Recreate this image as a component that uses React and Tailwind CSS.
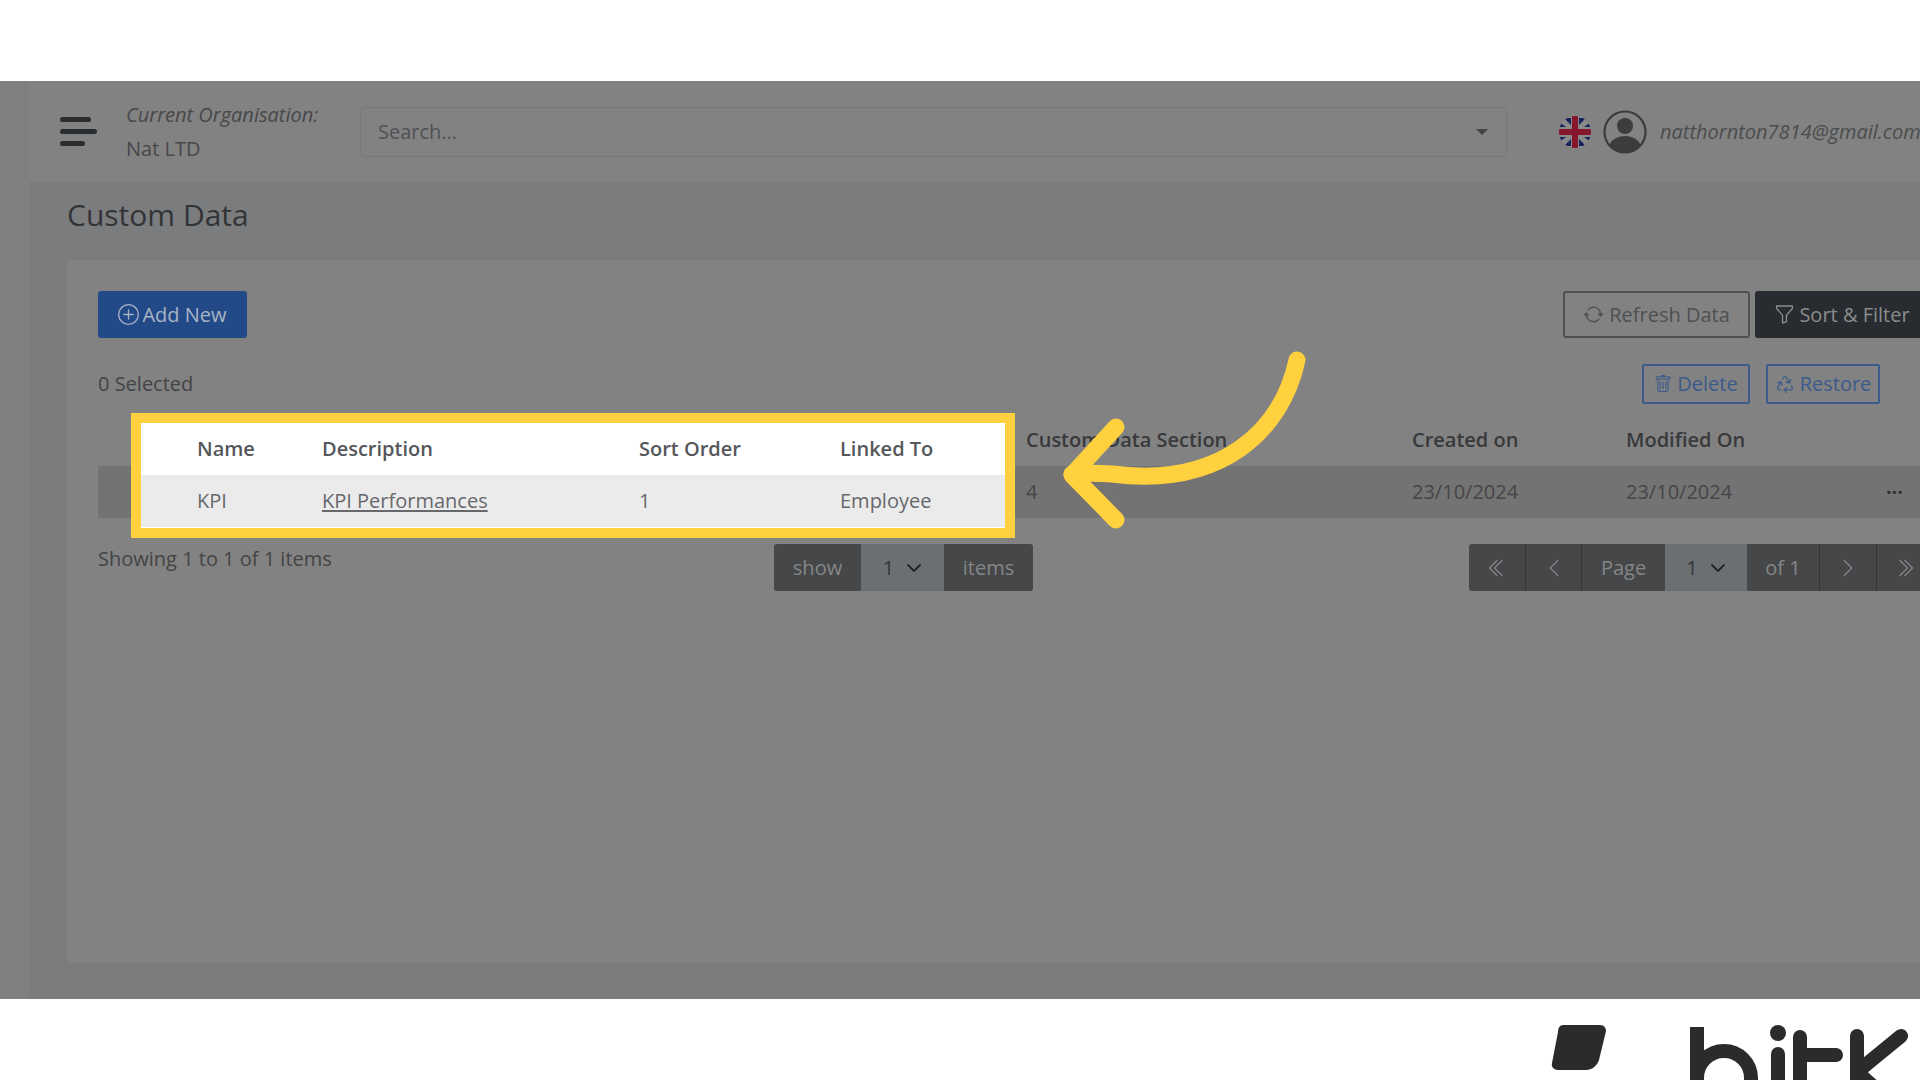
import { BsArrowRepeat, BsChevronDoubleLeft, BsChevronDoubleRight, BsChevronDown, BsChevronLeft, BsChevronRight, BsFunnel, BsPlusCircle, BsTrash } from "react-icons/bs";
import { Recycle } from "lucide-react";

const gridCols = "grid grid-cols-[98px_125px_317px_201px_187px_386px_214px_279px] items-center";

function Flag() {
    return (
        <svg width="32" height="32" viewBox="0 0 32 32">
            <defs>
                <clipPath id="flagClip">
                    <circle cx="16" cy="16" r="16" />
                </clipPath>
            </defs>
            <g clipPath="url(#flagClip)">
                <rect width="32" height="32" fill="#8a8a8a" />
                <path d="M0 0L32 32M32 0L0 32" stroke="#8a8a8a" strokeWidth="7" />
                <path d="M5 2L12 9V2ZM27 2L20 9V2ZM5 30L12 23V30ZM27 30L20 23V30ZM0 6L7 11H0ZM32 6L25 11H32ZM0 26L7 21H0ZM32 26L25 21H32Z" fill="#14235a" />
                <path d="M13 0H19V13H32V19H19V32H13V19H0V13H13Z" fill="#86162c" />
            </g>
        </svg>
    );
}

function UserIcon() {
    return (
        <svg width="44" height="44" viewBox="0 0 44 44">
            <defs>
                <clipPath id="userClip">
                    <circle cx="22" cy="22" r="20" />
                </clipPath>
            </defs>
            <circle cx="22" cy="16" r="8" fill="#3b3c3d" />
            <ellipse cx="22" cy="38" rx="16" ry="12" fill="#3b3c3d" clipPath="url(#userClip)" />
            <circle cx="22" cy="22" r="20.5" fill="none" stroke="#3b3c3d" strokeWidth="2.2" />
        </svg>
    );
}

function Arrow() {
    return (
        <svg className="absolute left-[1050px] top-[265px]" width="270" height="200" viewBox="1050 346 270 200">
            <path d="M1297 360C1282 430 1222 488 1112 474C1098 473 1084 473 1072 474" fill="none" stroke="#ffd13f" strokeWidth="17" strokeLinecap="round" />
            <path d="M1116 427L1072 475L1116 520" fill="none" stroke="#ffd13f" strokeWidth="17" strokeLinecap="round" strokeLinejoin="round" />
        </svg>
    );
}

function Logo() {
    return (
        <svg width="420" height="81" viewBox="1500 999 420 81">
            <path d="M1563 1025H1600C1604 1025 1606 1028 1606 1031L1599 1060C1597 1066 1592 1070 1586 1070H1558C1554 1070 1551 1067 1552 1063L1558 1032C1558 1028 1560 1025 1563 1025Z" fill="#2c2a2d" />
            <path d="M1697 1027V1110" stroke="#2c2a2d" strokeWidth="14" fill="none" />
            <path d="M1697 1078A27 27 0 1 1 1751 1078A27 27 0 1 1 1697 1078" stroke="#2c2a2d" strokeWidth="14" fill="none" />
            <circle cx="1778" cy="1033" r="8" fill="#2c2a2d" />
            <path d="M1778 1054V1100" stroke="#2c2a2d" strokeWidth="14" strokeLinecap="round" fill="none" />
            <path d="M1800 1037V1100M1800 1055H1836" stroke="#2c2a2d" strokeWidth="14" strokeLinecap="round" fill="none" />
            <path d="M1857 1036V1100M1857 1072L1901 1036M1857 1072L1900 1110" stroke="#2c2a2d" strokeWidth="14" strokeLinecap="round" fill="none" />
        </svg>
    );
}

function TableHead({ color }) {
    return (
        <div className={`${gridCols} h-[53px] font-semibold text-[20px] ${color}`}>
            <div></div>
            <div>Name</div>
            <div>Description</div>
            <div>Sort Order</div>
            <div>Linked To</div>
            <div>Custom Data Section</div>
            <div>Created on</div>
            <div>Modified On</div>
        </div>
    );
}

function TableRow({ color, bg }) {
    return (
        <div className={`${gridCols} h-[52px] text-[20px] ${color} ${bg}`}>
            <div></div>
            <div>KPI</div>
            <div className="underline underline-offset-2">KPI Performances</div>
            <div>1</div>
            <div>Employee</div>
            <div>4</div>
            <div>23/10/2024</div>
            <div className="flex justify-between">
                <span>23/10/2024</span>
                <span className="pr-[2px] font-bold text-[#333]">···</span>
            </div>
        </div>
    );
}

function PagerCell({ children, className }) {
    return <div className={`flex h-full items-center justify-center border-r border-[#333537] bg-[#454749] text-[#858687] ${className}`}>{children}</div>;
}

export default function App() {
    return (
        <div className="flex h-screen w-[1920px] flex-col overflow-hidden bg-white font-['Open_Sans',sans-serif]">
            <div className="h-[81px] shrink-0 bg-white"></div>

            <div className="relative flex h-[918px] w-[2000px] shrink-0 bg-[#828282]">
                <div className="w-[29px] shrink-0 bg-[#808080]"></div>

                <div className="flex flex-1 flex-col">
                    <header className="flex h-[101px] shrink-0 items-center bg-[#828282]">
                        <div className="ml-[31px] flex w-[66px] flex-col gap-[7px]">
                            <div className="h-[5px] w-[31px] rounded-full bg-[#2a2d30]"></div>
                            <div className="h-[5px] w-[37px] rounded-full bg-[#2a2d30]"></div>
                            <div className="h-[5px] w-[25px] rounded-full bg-[#2a2d30]"></div>
                        </div>
                        <div className="ml-[0px] flex w-[234px] flex-col gap-[9px] text-[20px] leading-[25px] text-[#474849]">
                            <div className="italic">Current Organisation:</div>
                            <div>Nat LTD</div>
                        </div>
                        <div className="flex h-[50px] w-[1147px] items-center justify-between rounded-[4px] border border-[#777879] pl-[17px] pr-[18px] text-[20px] text-[#505152]">
                            <span>Search...</span>
                            <div className="h-0 w-0 border-x-[6px] border-t-[6px] border-x-transparent border-t-[#444]"></div>
                        </div>
                        <div className="ml-[52px] flex items-center gap-[12px]">
                            <Flag />
                            <UserIcon />
                        </div>
                        <div className="ml-[13px] text-[20px] italic text-[#4b4c4d]">natthornton7814@gmail.com</div>
                    </header>

                    <main className="flex-1 bg-[#7b7c7e] pl-[38px]">
                        <h1 className="flex h-[78px] items-center pb-[14px] text-[30px] text-[#323436]">Custom Data</h1>
                        <div className="h-[703px] rounded-l-[6px] bg-[#828282]">
                            <div className="flex justify-between pl-[31px] pr-[71px] pt-[31px]">
                                <button className="flex h-[47px] w-[149px] items-center justify-center gap-[3px] rounded-[3px] bg-[#224a88] text-[20px] text-[#a9b4c5]">
                                    <BsPlusCircle size={21} />
                                    Add New
                                </button>
                                <div className="flex gap-[5px]">
                                    <button className="flex h-[47px] w-[187px] items-center justify-center gap-[5px] rounded-[3px] border-2 border-[#4f5052] text-[20px] text-[#4f5052]">
                                        <BsArrowRepeat size={21} />
                                        Refresh Data
                                    </button>
                                    <button className="flex h-[47px] w-[174px] items-center justify-center gap-[4px] rounded-[3px] bg-[#282c30] text-[20px] text-[#8b8c8d]">
                                        <BsFunnel size={21} />
                                        Sort &amp; Filter
                                    </button>
                                </div>
                            </div>

                            <div className="flex items-center justify-between pl-[31px] pr-[120px] pt-[26px]">
                                <div className="text-[20px] text-[#434445]">0 Selected</div>
                                <div className="flex gap-[16px]">
                                    <button className="flex h-[40px] w-[108px] items-center justify-center gap-[5px] rounded-[2px] border-2 border-[#3c5a8c] text-[20px] text-[#3c5a8c]">
                                        <BsTrash size={18} />
                                        Delete
                                    </button>
                                    <button className="flex h-[40px] w-[114px] items-center justify-center gap-[5px] rounded-[2px] border-2 border-[#3c5a8c] text-[20px] text-[#3c5a8c]">
                                        <Recycle size={20} strokeWidth={1.5} />
                                        Restore
                                    </button>
                                </div>
                            </div>

                            <div className="ml-[31px] mt-[9px]">
                                <TableHead color="text-[#38393b]" />
                                <TableRow color="text-[#454647]" bg="bg-[#737373]" />
                            </div>

                            <div className="flex items-start pl-[31px] pt-[26px]">
                                <div className="w-[676px] pt-[-4px] text-[20px] leading-[30px] text-[#434445]">Showing 1 to 1 of 1 items</div>
                                <div className="flex h-[47px] w-[259px] items-center overflow-hidden rounded-[3px] text-[20px]">
                                    <div className="flex h-full w-[87px] items-center justify-center bg-[#454749] text-[#858687]">show</div>
                                    <div className="flex h-full w-[83px] items-center justify-center gap-[12px] bg-[#6b6f72] text-[#353638]">
                                        1 <BsChevronDown size={16} strokeWidth={1} className="text-[#1d1e20]" />
                                    </div>
                                    <div className="flex h-full w-[89px] items-center justify-center bg-[#454749] text-[#858687]">items</div>
                                </div>
                                <div className="ml-[436px] flex h-[47px] w-[520px] items-center overflow-hidden rounded-l-[3px] text-[20px]">
                                    <PagerCell className="w-[57px]"><BsChevronDoubleLeft size={20} /></PagerCell>
                                    <PagerCell className="w-[56px]"><BsChevronLeft size={20} /></PagerCell>
                                    <PagerCell className="w-[83px] border-r-0">Page</PagerCell>
                                    <div className="flex h-full w-[82px] items-center justify-center gap-[12px] bg-[#6b6f72] text-[#353638]">
                                        1 <BsChevronDown size={16} strokeWidth={1} className="text-[#1d1e20]" />
                                    </div>
                                    <PagerCell className="w-[73px]">of 1</PagerCell>
                                    <PagerCell className="w-[57px]"><BsChevronRight size={20} /></PagerCell>
                                    <PagerCell className="w-[57px] justify-start pl-[18px]"><BsChevronDoubleRight size={20} /></PagerCell>
                                </div>
                            </div>
                        </div>
                    </main>
                </div>

                {/* spotlight over the first table columns */}
                <div className="absolute left-[131px] top-[332px] h-[125px] w-[884px] overflow-hidden border-[10px] border-[#ffd13f] bg-white">
                    <div className="-ml-[42px] w-[1900px]">
                        <div className="-mt-[1px]">
                            <TableHead color="text-[#55575b]" />
                        </div>
                        <TableRow color="text-[#67686b]" bg="bg-[#ebebeb]" />
                    </div>
                </div>

                <Arrow />
            </div>

            <div className="flex min-h-0 flex-1 justify-end bg-white">
                <Logo />
            </div>
        </div>
    );
}
